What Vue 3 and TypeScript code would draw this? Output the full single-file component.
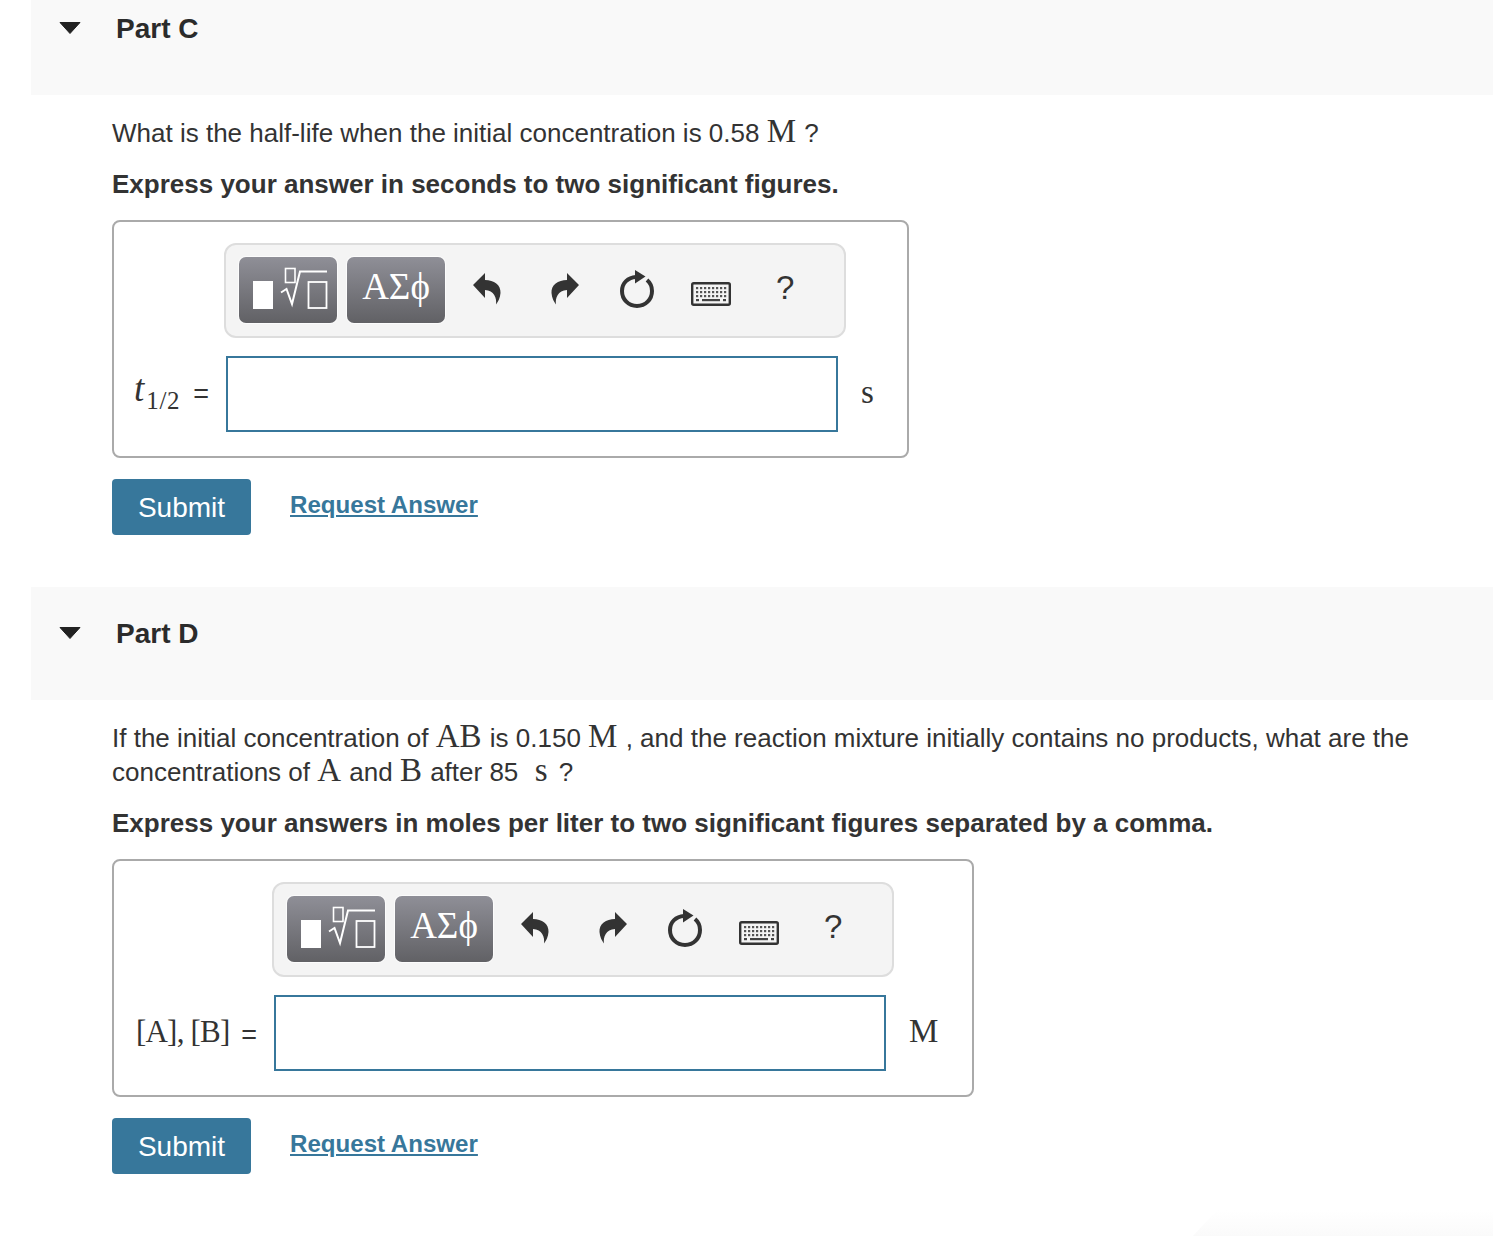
<script setup lang="ts">
interface Segment {
  text: string
  math?: boolean
  unit?: boolean
}

interface Part {
  title: string
  question: Segment[]
  hint: string
  label: 'half' | 'conc'
  unit: string
}

const parts: Part[] = [
  {
    title: 'Part C',
    question: [
      { text: 'What is the half-life when the initial concentration is 0.58 ' },
      { text: 'M', math: true },
      { text: ' ?' },
    ],
    hint: 'Express your answer in seconds to two significant figures.',
    label: 'half',
    unit: 's',
  },
  {
    title: 'Part D',
    question: [
      { text: 'If the initial concentration of ' },
      { text: 'AB', math: true },
      { text: ' is 0.150 ' },
      { text: 'M', math: true },
      { text: ' , and the reaction mixture initially contains no products, what are the concentrations of ' },
      { text: 'A', math: true },
      { text: ' and ' },
      { text: 'B', math: true },
      { text: ' after 85 \u00a0' },
      { text: 's', math: true, unit: true },
      { text: ' ?' },
    ],
    hint: 'Express your answers in moles per liter to two significant figures separated by a comma.',
    label: 'conc',
    unit: 'M',
  },
]

const keyRows = [
  { y: 5, xs: [5, 9, 13, 17, 21, 25, 29, 33] },
  { y: 9, xs: [5, 9, 13, 17, 21, 25, 29, 33] },
  { y: 13, xs: [5, 9, 13, 17, 21, 25, 29, 33] },
]
</script>

<template>
  <div class="page">
    <section v-for="part in parts" :key="part.title" class="part">
      <header class="part-head">
        <svg class="caret" width="22" height="12" viewBox="0 0 22 12">
          <path d="M1 0.5H21L11 11.5Z" fill="#222" stroke="#222" stroke-linejoin="round" />
        </svg>
        <h2>{{ part.title }}</h2>
      </header>

      <div class="part-body">
        <p class="question">
          <template v-for="(seg, i) in part.question" :key="i">
            <span v-if="seg.math" class="math" :class="{ 'math-unit': seg.unit }">{{ seg.text }}</span>
            <template v-else>{{ seg.text }}</template>
          </template>
        </p>
        <p class="hint">{{ part.hint }}</p>

        <div class="answer-box">
          <div class="toolbar">
            <button class="tpl-btn" type="button" aria-label="Templates">
              <svg width="98" height="66" viewBox="0 0 98 66">
                <rect x="14" y="24" width="20" height="28" fill="#fff" />
                <rect x="46.5" y="11.5" width="9.5" height="14" fill="none" stroke="#fff" stroke-width="1.6" />
                <path d="M42 35.5L47.5 32L53 47L61 14.5H88" fill="none" stroke="#fff" stroke-width="2" />
                <rect x="69.5" y="25" width="18" height="26" fill="none" stroke="#fff" stroke-width="1.8" />
              </svg>
            </button>
            <button class="tpl-btn greek" type="button">ΑΣϕ</button>

            <svg class="ico undo" width="28" height="32" viewBox="0 0 28 32">
              <path d="M0 12L12 0V7C21 7 28 12 27.5 20C27.2 25 25 29 23 31.5C24 25 21 17.5 12 17V25Z" fill="#333" />
            </svg>
            <svg class="ico redo" width="28" height="32" viewBox="0 0 28 32">
              <path d="M28 12L16 0V7C7 7 0 12 .5 20C.8 25 3 29 5 31.5C4 25 7 17.5 16 17V25Z" fill="#333" />
            </svg>
            <svg class="ico reset" width="34" height="38" viewBox="0 0 34 38">
              <path d="M16 7C8 7.5 2 13 2 21C2 29.5 8.5 36 17 36C25.5 36 32 29.5 32 21C32 16.5 30 12.5 27 10" fill="none" stroke="#333" stroke-width="4" />
              <path d="M15 0L25.5 6.5L15 13.5Z" fill="#333" />
            </svg>
            <svg class="ico keyboard" width="40" height="24" viewBox="0 0 40 24">
              <rect x="1.2" y="1.2" width="37.6" height="21.6" rx="1.5" fill="none" stroke="#333" stroke-width="2.4" />
              <g v-for="row in keyRows" :key="row.y">
                <rect v-for="x in row.xs" :key="x" :x="x" :y="row.y" width="2.2" height="2.2" fill="#555" />
              </g>
              <rect x="11" y="17" width="18" height="2.2" fill="#444" />
              <rect x="5" y="17" width="3" height="2.2" fill="#444" />
              <rect x="32" y="17" width="3" height="2.2" fill="#444" />
            </svg>
            <span class="help">?</span>
          </div>

          <div class="label" :class="part.label">
            <span v-if="part.label === 'half'" class="var">t<sub>1/2</sub></span>
            <span v-else class="conc-text">[A], [B]</span>
            <span class="eq"><span class="eq-sign">=</span></span>
          </div>
          <input class="answer-input" type="text" />
          <span class="unit">{{ part.unit }}</span>
        </div>

        <div class="actions">
          <button class="submit" type="button">Submit</button>
          <a class="request" href="#">Request Answer</a>
        </div>
      </div>
    </section>
    <div class="fade"></div>
  </div>
</template>

<style>
html,
body {
  background: #fff;
}
</style>

<style scoped>
.page {
  position: relative;
  height: 1254px;
  margin-top: -18px;
  padding-left: 31px;
  box-sizing: border-box;
  overflow: hidden;
  font-family: "Liberation Sans", Arial, sans-serif;
  color: #333;
}

.part + .part {
  margin-top: 52px;
}

.part-head {
  display: flex;
  align-items: flex-start;
  height: 113px;
  background: #f9f9f9;
}

.caret {
  margin: 40px 0 0 28px;
}

.part-head h2 {
  margin: 30px 0 0 35px;
  font-size: 28px;
  line-height: 34px;
  font-weight: 700;
  color: #2b2b2b;
}

.part-body {
  padding: 21px 60px 0 81px;
}

.question,
.hint {
  margin: 0;
  font-size: 26px;
  line-height: 34px;
}

.hint {
  margin-top: 17px;
  font-weight: 700;
}

.math {
  margin-right: 1px;
  font-family: "Liberation Serif", "Times New Roman", serif;
  font-size: 33px;
  line-height: 20px;
}

.math-unit {
  margin: 0 4px 0 2px;
}

.answer-box {
  display: inline-grid;
  grid-template-columns: auto 612px auto;
  align-items: center;
  margin-top: 19px;
  padding: 21px 33.5px 24px 20px;
  border: 2px solid #aaa;
  border-radius: 8px;
  vertical-align: top;
}

.toolbar {
  grid-column: 2 / 4;
  display: flex;
  align-items: center;
  box-sizing: border-box;
  width: 622px;
  height: 95px;
  margin-left: -2px;
  padding-left: 13px;
  background: #f4f4f4;
  border: 2px solid #ddd;
  border-radius: 12px;
}

.tpl-btn {
  width: 98px;
  height: 66px;
  margin: 0 10px 2px 0;
  padding: 0;
  border: 0;
  border-radius: 7px;
  background: linear-gradient(#8f8f97, #616165);
  box-shadow: 0 0 0 1px rgba(255, 255, 255, .7);
  color: #fff;
}

.tpl-btn svg {
  display: block;
}

.greek {
  font-family: "Liberation Serif", "Times New Roman", serif;
  font-size: 37px;
  line-height: 60px;
  padding-bottom: 6px;
}

.ico {
  display: block;
  flex: none;
}

.undo {
  margin: 0 0 4px 18px;
}

.redo {
  margin: 0 0 4px 50px;
}

.reset {
  margin: 0 0 4px 41px;
}

.keyboard {
  margin: 7px 0 0 37px;
}

.help {
  margin: 0 0 6px 45px;
  font-size: 33px;
  line-height: 40px;
  color: #333;
}

.label {
  display: flex;
  align-items: baseline;
  color: #333;
}

.label.half {
  width: 92px;
  margin-top: 8px;
}

.label.conc {
  width: 140px;
  margin-top: 16px;
}

.var,
.conc-text {
  font-family: "Liberation Serif", "Times New Roman", serif;
}

.var {
  font-size: 37px;
  font-style: italic;
  line-height: 40px;
}

.var sub {
  margin-left: 2px;
  font-size: 25px;
  font-style: normal;
  letter-spacing: .6px;
  line-height: 0;
}

.conc-text {
  margin-left: 2px;
  font-size: 31px;
  letter-spacing: -.8px;
  line-height: 40px;
}

.eq {
  margin: 0 17px 0 auto;
  font-size: 27px;
}

.eq-sign {
  vertical-align: -2px;
}

.answer-input {
  box-sizing: border-box;
  width: 612px;
  height: 76px;
  margin-top: 18px;
  border: 2px solid #37779b;
  background: #fff;
  outline: none;
}

.unit {
  margin: 14px 0 0 23px;
  font-family: "Liberation Serif", "Times New Roman", serif;
  font-size: 33px;
  line-height: 40px;
}

.actions {
  display: flex;
  align-items: flex-start;
  margin-top: 21px;
}

.submit {
  width: 139px;
  height: 56px;
  padding: 2px 0 0;
  border: 0;
  border-radius: 4px;
  background: #37779b;
  color: #fff;
  font-family: inherit;
  font-size: 28px;
}

.request {
  margin: 9px 0 0 39px;
  font-size: 24.1px;
  line-height: 34px;
  font-weight: 700;
  color: #37779b;
}

.fade {
  position: absolute;
  right: 0;
  bottom: 0;
  width: 300px;
  height: 26px;
  background: linear-gradient(#fff, #f8f8f8);
  clip-path: polygon(8% 0, 100% 0, 100% 100%, 0 100%);
  opacity: .7;
}
</style>
